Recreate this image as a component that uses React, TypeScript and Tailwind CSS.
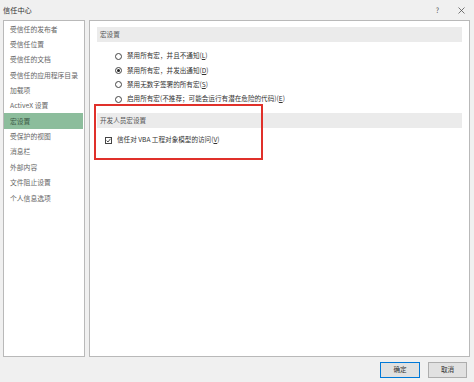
import React from "react";

const navItems = [
  "受信任的发布者",
  "受信任位置",
  "受信任的文档",
  "受信任的应用程序目录",
  "加载项",
  "ActiveX 设置",
  "宏设置",
  "受保护的视图",
  "消息栏",
  "外部内容",
  "文件阻止设置",
  "个人信息选项",
];

const radios = [
  { label: "禁用所有宏，并且不通知", key: "L", checked: false },
  { label: "禁用所有宏，并发出通知", key: "D", checked: true },
  { label: "禁用无数字签署的所有宏", key: "S", checked: false },
  { label: "启用所有宏(不推荐；可能会运行有潜在危险的代码)", key: "E", checked: false },
];

const font = { fontFamily: '"Noto Sans CJK SC", "Noto Sans", sans-serif' };

const Radio = ({ checked }: { checked: boolean }) => (
  <span className="w-[7px] h-[7px] rounded-full border border-[#444] bg-white flex items-center justify-center shrink-0">
    {checked && <span className="w-[3px] h-[3px] rounded-full bg-[#222]" />}
  </span>
);

const SectionBar = ({ title }: { title: string }) => (
  <div className="h-[15px] bg-[#ebebeb] flex items-center pl-[3px] text-[6.6px] text-[#555]">{title}</div>
);

export default function App() {
  return (
    <div className="w-[474px] h-[382px] bg-[#f0f0f0] flex flex-col overflow-hidden" style={font}>
      {/* title bar */}
      <div className="h-[20px] flex items-center justify-between pl-[3px] pr-[9px] text-[7.2px] text-[#333]">
        <span>信任中心</span>
        <div className="flex items-center gap-[19px] text-[#555]">
          <span className="text-[7px]">?</span>
          <svg width="7" height="7" viewBox="0 0 7 7">
            <path d="M0.5 0.5 L6.5 6.5 M6.5 0.5 L0.5 6.5" stroke="#555" strokeWidth="0.8" />
          </svg>
        </div>
      </div>

      {/* main */}
      <div className="flex-1 flex gap-[4px] px-[3px] pr-[4px] min-h-0">
        {/* left nav */}
        <div className="w-[82px] bg-white border border-[#b9b9b9] pr-[1px]">
          {navItems.map((item) => (
            <div
              key={item}
              className={`h-[15.36px] flex items-center pl-[6px] text-[6.8px] whitespace-nowrap ${
                item === "宏设置" ? "bg-[#8cbd9c] text-[#3e5a47]" : "text-[#666]"
              }`}
            >
              {item}
            </div>
          ))}
        </div>

        {/* right content */}
        <div className="flex-1 bg-white border border-[#b9b9b9] relative pt-[6px] pl-[7px] pr-[7px]">
          <SectionBar title="宏设置" />
          <div className="pt-[7px] pb-[7px] pl-[18px]">
            {radios.map((r) => (
              <div key={r.key} className="h-[14.3px] flex items-center gap-[5px] text-[6.6px] text-[#333] whitespace-nowrap">
                <Radio checked={r.checked} />
                <span>
                  {r.label}(<span className="underline">{r.key}</span>)
                </span>
              </div>
            ))}
          </div>
          <SectionBar title="开发人员宏设置" />
          <div className="mt-[5px] pl-[8px] h-[14px] flex items-center gap-[5px] text-[6.6px] text-[#333] whitespace-nowrap">
            <span className="w-[7px] h-[7px] border border-[#444] bg-white flex items-center justify-center shrink-0">
              <svg width="5" height="5" viewBox="0 0 5 5">
                <path d="M0.6 2.6 L2 4 L4.5 0.8" stroke="#222" strokeWidth="0.8" fill="none" />
              </svg>
            </span>
            <span>
              信任对 VBA 工程对象模型的访问(<span className="underline">V</span>)
            </span>
          </div>

          {/* red annotation box */}
          <div className="absolute left-[4px] top-[83px] w-[169px] h-[56px] border-2 border-[#e0302a]" />
        </div>
      </div>

      {/* bottom buttons */}
      <div className="h-[25px] flex items-center justify-end gap-[8px] pr-[7px]">
        <button className="w-[40px] h-[16px] bg-[#e1e1e1] border border-[#0078d7] text-[6.6px] text-[#333]">确定</button>
        <button className="w-[39px] h-[16px] bg-[#e1e1e1] border border-[#adadad] text-[6.6px] text-[#333]">取消</button>
      </div>
    </div>
  );
}
